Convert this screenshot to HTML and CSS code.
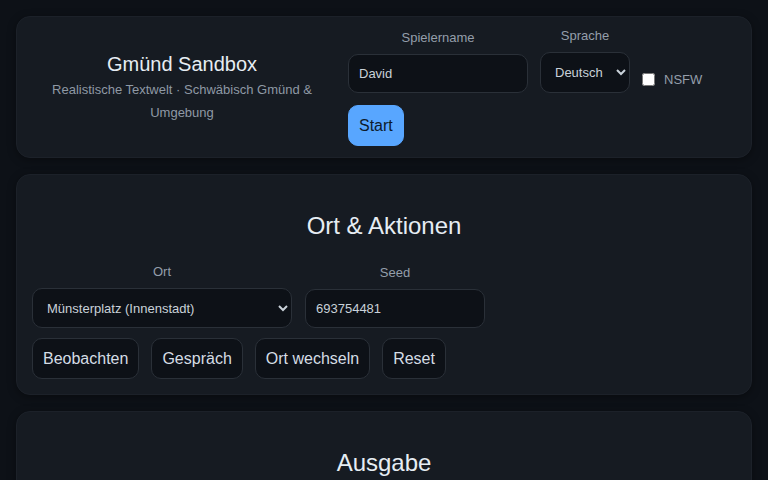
FILE: index.html
```html
<!DOCTYPE html>
<html lang="de">
<head>
    <meta charset="UTF-8">
    <meta name="viewport" content="width=device-width, initial-scale=1.0">
    <title>Gmünd Sandbox</title>
    <link rel="stylesheet" href="styles.css">
</head>
<body>
    <header class="card header">
        <div class="brand">
            <h1>Gmünd Sandbox</h1>
            <p class="sub">Realistische Textwelt · Schwäbisch Gmünd &amp; Umgebung</p>
        </div>
        <div class="controls">
            <div class="field">
                <label for="player">Spielername</label>
                <input type="text" id="player" class="w180" value="David">
            </div>
            <div class="field">
                <label for="lang">Sprache</label>
                <select id="lang" class="w90">
                    <option>Deutsch</option>
                    <option>English</option>
                </select>
            </div>
            <label class="check"><input type="checkbox" id="nsfw"> NSFW</label>
            <button class="primary" id="start">Start</button>
        </div>
    </header>

    <section class="card">
        <h2>Ort &amp; Aktionen</h2>
        <div class="row">
            <div class="field">
                <label for="place">Ort</label>
                <select id="place" class="w260">
                    <option>Münsterplatz (Innenstadt)</option>
                    <option>Marktplatz</option>
                    <option>Remspark</option>
                </select>
            </div>
            <div class="field">
                <label for="seed">Seed</label>
                <input type="text" id="seed" class="w180 small" value="693754481">
            </div>
        </div>
        <div class="actions">
            <button>Beobachten</button>
            <button>Gespräch</button>
            <button>Ort wechseln</button>
            <button>Reset</button>
        </div>
    </section>

    <section class="card">
        <h2>Ausgabe</h2>
        <div class="output" id="output">Noch keine Ausgabe.</div>
    </section>
</body>
</html>
```

FILE: styles.css
```css
body {
    margin: 0;
    padding: 16px;
    background-color: #0d1117;
    color: #e6edf3;
    font-family: "Liberation Sans", Arial, sans-serif;
}
.card {
    background-color: #161b22;
    border: 1px solid #1c2129;
    border-radius: 14px;
    padding: 15px;
    margin-bottom: 16px;
    box-shadow: 0 2px 8px rgba(0, 0, 0, 0.35);
}
.header {
    display: flex;
    align-items: center;
    gap: 16px;
    padding: 11px 15px;
}
.brand {
    flex: 0 0 300px;
    text-align: center;
    padding-top: 2px;
}
.brand h1 {
    margin: 0 0 2px;
    font-size: 20px;
    font-weight: 500;
    line-height: 23px;
}
.brand .sub {
    margin: 0;
    font-size: 13px;
    line-height: 23px;
    color: #8f99a5;
}
.controls {
    flex: 1;
    display: flex;
    flex-wrap: wrap;
    align-items: flex-end;
    gap: 12px;
}
.field {
    display: flex;
    flex-direction: column;
    align-items: center;
}
.field label {
    font-size: 13px;
    line-height: 16px;
    margin-bottom: 8px;
    color: #949eaa;
}
input[type="text"], select {
    box-sizing: border-box;
    background-color: #0d1117;
    color: #c9d1d9;
    border: 1px solid #2a3038;
    border-radius: 10px;
    padding: 0 10px;
    font-family: inherit;
    font-size: 13px;
    height: 39px;
}
select {
    height: 41px;
}
.small {
    height: 38px;
}
#place {
    height: 40px;
}
.w180 { width: 180px; }
.w90 { width: 90px; }
.w260 { width: 260px; }
.row .field + .field {
    margin-left: 1px;
}
.check {
    display: flex;
    align-items: center;
    gap: 9px;
    font-size: 13px;
    color: #949eaa;
    margin-bottom: 6px;
}
.check input {
    margin: 0;
    width: 13px;
    height: 13px;
}
button {
    font-family: inherit;
    font-size: 16px;
    line-height: 19px;
    padding: 10px;
    border-radius: 10px;
    border: 1px solid #2a3038;
    background-color: #0d1117;
    color: #d5dde5;
    cursor: pointer;
}
button.primary {
    background-color: #58a6ff;
    border-color: #58a6ff;
    color: #0d1a2b;
}
.card h2 {
    text-align: center;
    font-size: 24px;
    font-weight: 500;
    margin: 22px 0 24px;
}
.row {
    display: flex;
    flex-wrap: wrap;
    align-items: flex-end;
    gap: 12px;
}
.actions {
    display: flex;
    flex-wrap: wrap;
    gap: 12px;
    margin-top: 10px;
}
.output {
    min-height: 200px;
    padding: 12px;
    background-color: #0d1117;
    border: 1px solid #2a3038;
    border-radius: 10px;
    font-size: 14px;
    color: #8b949e;
}
```
